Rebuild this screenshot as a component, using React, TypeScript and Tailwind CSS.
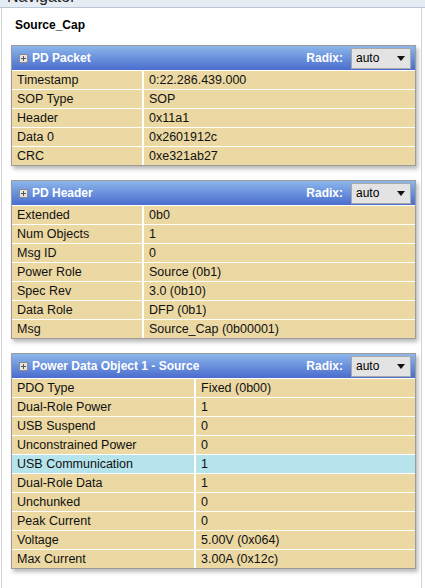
type Row = { label: string; value: string; highlight?: boolean };

type Section = {
  title: string;
  labelWidth: string;
  rows: Row[];
};

const SECTIONS: Section[] = [
  {
    title: "PD Packet",
    labelWidth: "w-[132px]",
    rows: [
      { label: "Timestamp", value: "0:22.286.439.000" },
      { label: "SOP Type", value: "SOP" },
      { label: "Header", value: "0x11a1" },
      { label: "Data 0", value: "0x2601912c" },
      { label: "CRC", value: "0xe321ab27" },
    ],
  },
  {
    title: "PD Header",
    labelWidth: "w-[132px]",
    rows: [
      { label: "Extended", value: "0b0" },
      { label: "Num Objects", value: "1" },
      { label: "Msg ID", value: "0" },
      { label: "Power Role", value: "Source (0b1)" },
      { label: "Spec Rev", value: "3.0 (0b10)" },
      { label: "Data Role", value: "DFP (0b1)" },
      { label: "Msg", value: "Source_Cap (0b00001)" },
    ],
  },
  {
    title: "Power Data Object 1 - Source",
    labelWidth: "w-[184px]",
    rows: [
      { label: "PDO Type", value: "Fixed (0b00)" },
      { label: "Dual-Role Power", value: "1" },
      { label: "USB Suspend", value: "0" },
      { label: "Unconstrained Power", value: "0" },
      { label: "USB Communication", value: "1", highlight: true },
      { label: "Dual-Role Data", value: "1" },
      { label: "Unchunked", value: "0" },
      { label: "Peak Current", value: "0" },
      { label: "Voltage", value: "5.00V (0x064)" },
      { label: "Max Current", value: "3.00A (0x12c)" },
    ],
  },
];

function PlusBox() {
  return (
    <svg width="9" height="9" viewBox="0 0 9 9" className="shrink-0">
      <rect x="0.5" y="0.5" width="8" height="8" fill="#e4e4e4" stroke="#8a8a8a" />
      <path d="M2 4.5h5M4.5 2v5" stroke="#555" strokeWidth="1" />
    </svg>
  );
}

function RadixSelect() {
  return (
    <div className="flex h-[21px] w-[60px] items-center justify-between border border-[#a8a8a8] bg-[#e3e3e3] pl-[4px] pr-[5px] text-[12px] text-black">
      <span>auto</span>
      <svg width="8" height="5" viewBox="0 0 8 5">
        <path d="M0 0h8L4 5z" fill="#111" />
      </svg>
    </div>
  );
}

function SectionTable({ section }: { section: Section }) {
  return (
    <div className="border border-[#9c9c9c] shadow-[2px_3px_4px_rgba(0,0,0,0.28)]">
      <div className="flex h-[24px] items-center justify-between bg-gradient-to-b from-[#8db6ea] to-[#4b6ccd] pl-[7px] pr-[4px]">
        <div className="flex items-center gap-[4px]">
          <PlusBox />
          <span className="text-[12px] font-bold text-white">{section.title}</span>
        </div>
        <div className="flex items-center gap-[8px]">
          <span className="text-[12px] font-bold text-white">Radix:</span>
          <RadixSelect />
        </div>
      </div>
      {section.rows.map((r) => (
        <div
          key={r.label}
          className={`flex h-[19px] items-center border-t border-white text-[12.5px] text-[#111] ${r.highlight ? "bg-[#b5e4ec]" : "bg-[#ebd8a2]"}`}
        >
          <div className={`${section.labelWidth} h-full shrink-0 border-r-2 border-white pl-[5px] leading-[18px]`}>{r.label}</div>
          <div className="h-full pl-[5px] leading-[18px]">{r.value}</div>
        </div>
      ))}
    </div>
  );
}

export default function App() {
  return (
    <div className="h-[588px] w-[425px] overflow-hidden bg-white font-['Liberation_Sans',Arial,sans-serif]">
      <div className="h-[8px] overflow-hidden border-b border-[#b9c6d6] bg-[#e6ecf4] pl-[7px]">
        <div className="mt-[-12px] text-[16px] leading-[18px] text-[#222]">Navigator</div>
      </div>
      <div className="ml-[1px] h-full w-[421px] border-x border-[#d4d4d4] bg-white pl-[9px] pr-[5px]">
        <div className="pl-[4px] pt-[10px] text-[12px] font-bold leading-[14px] text-black">Source_Cap</div>
        <div className="mt-[13px] flex flex-col gap-[14px]">
          {SECTIONS.map((s) => (
            <SectionTable key={s.title} section={s} />
          ))}
        </div>
      </div>
    </div>
  );
}
